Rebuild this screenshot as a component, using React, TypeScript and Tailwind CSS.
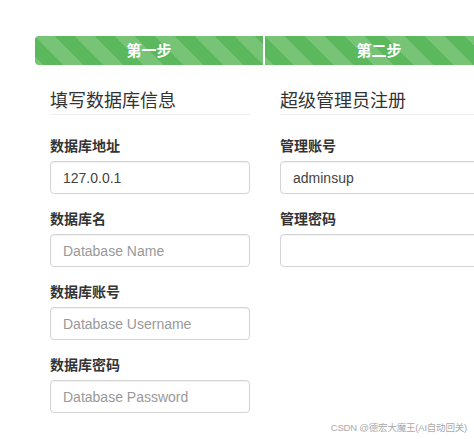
import React from "react";

const cjk = { fontFamily: '"Helvetica Neue", "Liberation Sans", "Noto Sans CJK SC", sans-serif' };

function Field({ label, value, placeholder }: { label: string; value?: string; placeholder?: string }) {
  return (
    <div className="flex flex-col">
      <label className="mt-[15px] mb-[5px] h-[20px] text-[14px] leading-[20px] font-bold text-[#333]">{label}</label>
      <input
        readOnly
        value={value ?? ""}
        placeholder={placeholder}
        className="h-[33px] w-[200px] rounded-[4px] border border-[#d4d4d4] bg-white px-[12px] text-[14px] text-[#444] shadow-[inset_0_1px_1px_rgba(0,0,0,0.06)] outline-none placeholder:text-[#999]"
        style={cjk}
      />
    </div>
  );
}

function Column({ title, children }: { title: string; children: React.ReactNode }) {
  return (
    <div className="w-[230px] shrink-0 px-[15px]">
      <div className="mt-[24px] w-[200px] border-b border-[#eee] pb-[1px] text-[18px] leading-[24px] text-[#333]">
        {title}
      </div>
      <div className="mt-[6px]">{children}</div>
    </div>
  );
}

const stripe =
  "bg-[#5cb85c] bg-[linear-gradient(45deg,rgba(255,255,255,0.17)_25%,transparent_25%,transparent_50%,rgba(255,255,255,0.17)_50%,rgba(255,255,255,0.17)_75%,transparent_75%,transparent)] bg-size-[40px_40px]";

export default function App() {
  return (
    <div className="relative h-[439px] w-[474px] overflow-hidden bg-white" style={cjk}>
      <div className="pl-[35px] pt-[36px]">
        <div className="flex w-[600px] gap-[2px]">
          <div className={`h-[29px] w-[228px] shrink-0 rounded-l-[4px] text-center text-[15px] font-bold leading-[29px] text-white ${stripe}`}>
            第一步
          </div>
          <div className={`h-[29px] w-[228px] shrink-0 text-center text-[15px] font-bold leading-[29px] text-white ${stripe}`}>
            第二步
          </div>
        </div>
        <div className="flex w-[600px]">
          <Column title="填写数据库信息">
            <Field label="数据库地址" value="127.0.0.1" />
            <Field label="数据库名" placeholder="Database Name" />
            <Field label="数据库账号" placeholder="Database Username" />
            <Field label="数据库密码" placeholder="Database Password" />
          </Column>
          <Column title="超级管理员注册">
            <Field label="管理账号" value="adminsup" />
            <Field label="管理密码" />
          </Column>
        </div>
      </div>
      <div className="absolute right-[7px] bottom-[4px] text-[9.5px] leading-[14px] tracking-[-0.2px] text-[#aaa]">
        CSDN @德宏大魔王(AI自动回关)
      </div>
    </div>
  );
}
